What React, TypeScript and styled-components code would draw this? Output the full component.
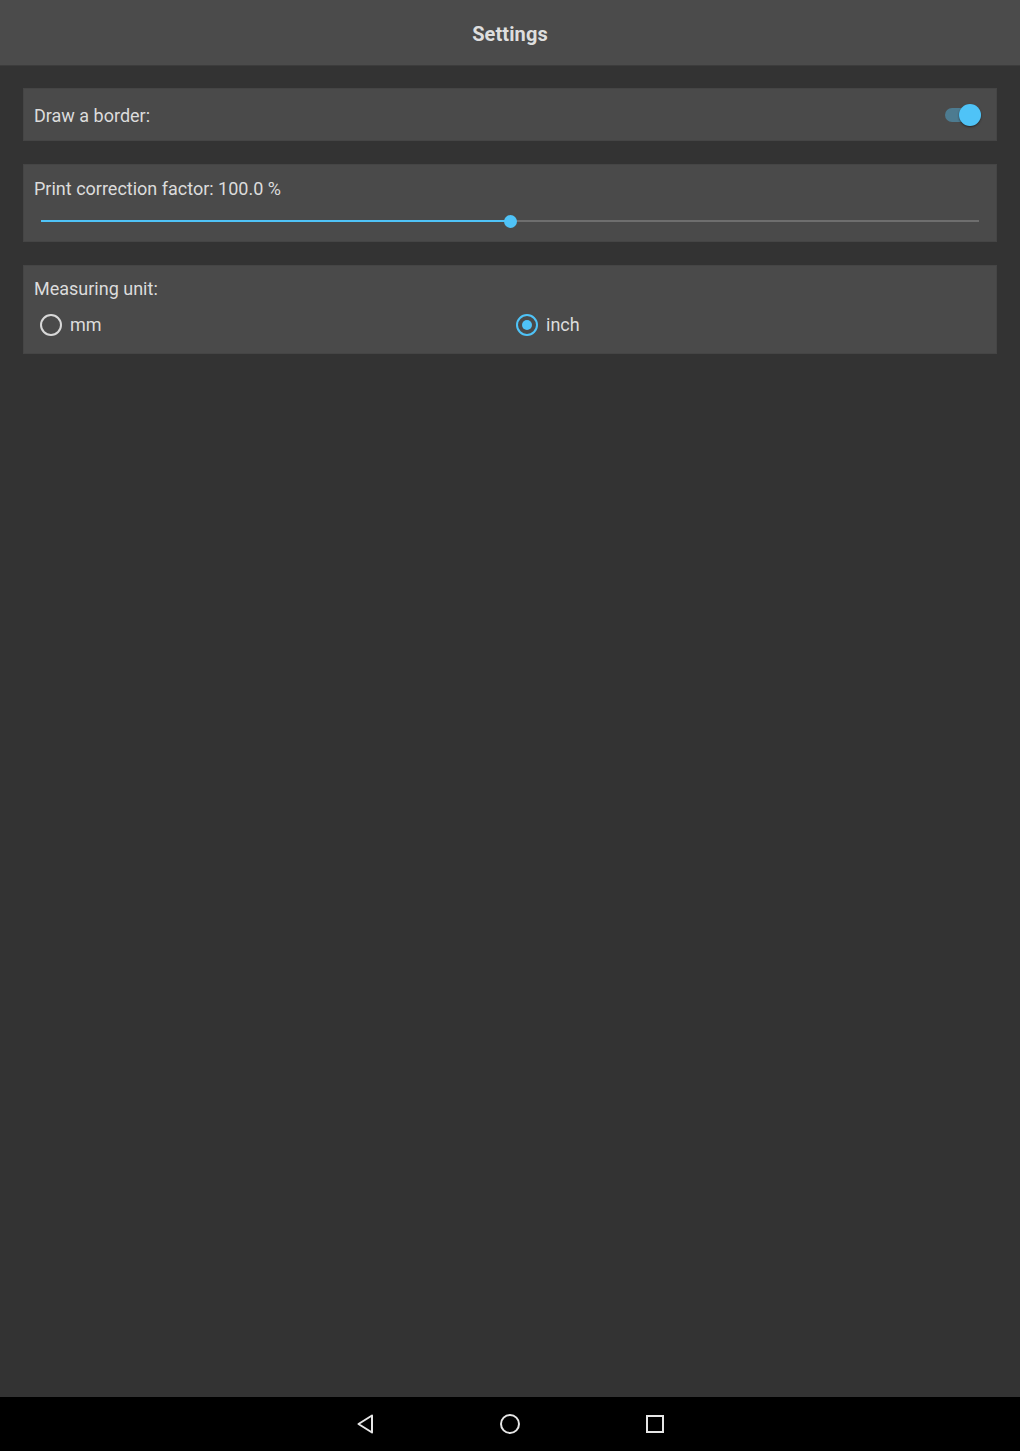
import React, { useState } from "react";
import styled, { createGlobalStyle } from "styled-components";

//global//

const GlobalStyle = createGlobalStyle`
  html, body {
    margin: 0;
    padding: 0;
    background: #333333;
  }
  body {
    font-family: Roboto, "Noto Sans", sans-serif;
  }
`;

//styled-components//

const Screen = styled.div`
  display: flex;
  flex-direction: column;
  height: 100vh;
  background: #333333;
`;

const Header = styled.header`
  height: 65px;
  flex-shrink: 0;
  display: flex;
  align-items: center;
  justify-content: center;
  background: #4b4b4b;
  border-bottom: 1px solid #3c3c3c;
`;

const Title = styled.h1`
  margin: 0;
  font-size: 20px;
  font-weight: 700;
  color: #dedede;
  letter-spacing: 0.1px;
  padding-top: 2px;
`;

const Content = styled.main`
  flex: 1;
  display: flex;
  flex-direction: column;
  gap: 23px;
  padding: 22px 23px 0;
`;

const Card = styled.section`
  background: #4a4a4a;
  border: 1px solid #454545;
  padding: 0 10px;
`;

const SwitchRow = styled(Card)`
  box-sizing: border-box;
  height: 53px;
  padding-top: 1px;
  display: flex;
  align-items: center;
  justify-content: space-between;
`;

const SliderCard = styled(Card)`
  padding-top: 13px;
  padding-bottom: 9px;
`;

const RadioCard = styled(Card)`
  padding-top: 12px;
  padding-bottom: 17px;
`;

const Label = styled.p`
  margin: 0;
  font-size: 18px;
  line-height: 21px;
  color: #dcdcdc;
`;

const SwitchTrack = styled.button<{ $on: boolean }>`
  position: relative;
  width: 36px;
  height: 14px;
  margin-right: 5px;
  padding: 0;
  border: none;
  border-radius: 7px;
  background: ${(p) => (p.$on ? "#4d7b90" : "#6a6a6a")};
  cursor: pointer;
`;

const SwitchThumb = styled.span<{ $on: boolean }>`
  position: absolute;
  top: -4px;
  left: ${(p) => (p.$on ? "14px" : "-2px")};
  width: 22px;
  height: 22px;
  border-radius: 50%;
  background: ${(p) => (p.$on ? "#4fc3f7" : "#bdbdbd")};
  box-shadow: 0 1px 2px rgba(0, 0, 0, 0.5);
`;

const SliderWrap = styled.div`
  position: relative;
  height: 22px;
  margin: 11px 7px 0;
  display: flex;
  align-items: center;
`;

const SliderTrack = styled.div`
  position: relative;
  width: 100%;
  height: 2px;
  background: #6e6e6e;
`;

const SliderFill = styled.div`
  position: absolute;
  left: 0;
  top: 0;
  height: 2px;
  background: #4fc3f7;
`;

const SliderThumb = styled.div`
  position: absolute;
  top: 50%;
  width: 13px;
  height: 13px;
  margin-left: -6.5px;
  margin-top: -6.5px;
  border-radius: 50%;
  background: #4fc3f7;
`;

const RadioGroup = styled.div`
  display: grid;
  grid-template-columns: 1fr 1fr;
  margin-top: 15px;
`;

const RadioOption = styled.label`
  display: flex;
  align-items: center;
  gap: 8px;
  padding-left: 6px;
  font-size: 18px;
  line-height: 22px;
  color: #dcdcdc;
  cursor: pointer;
`;

const RadioCircle = styled.span<{ $checked: boolean }>`
  width: 18px;
  height: 18px;
  border-radius: 50%;
  border: 2px solid ${(p) => (p.$checked ? "#4fc3f7" : "#d8d8d8")};
  display: flex;
  align-items: center;
  justify-content: center;

  &::after {
    content: "";
    width: 10px;
    height: 10px;
    border-radius: 50%;
    background: #4fc3f7;
    display: ${(p) => (p.$checked ? "block" : "none")};
  }
`;

const NavBar = styled.nav`
  height: 54px;
  flex-shrink: 0;
  background: #000000;
  display: flex;
  align-items: center;
  justify-content: center;
  gap: 123px;
`;

const NavButton = styled.div`
  width: 22px;
  height: 22px;
  display: flex;
  align-items: center;
  justify-content: center;
`;

////////////////////

const units = ["mm", "inch"];

const App = () => {
  const [border, setBorder] = useState(true);
  const [unit, setUnit] = useState("inch");
  const factor = 50;

  return (
    <Screen>
      <GlobalStyle />
      <Header>
        <Title>Settings</Title>
      </Header>

      <Content>
        <SwitchRow>
          <Label>Draw a border:</Label>
          <SwitchTrack $on={border} onClick={() => setBorder(!border)}>
            <SwitchThumb $on={border} />
          </SwitchTrack>
        </SwitchRow>

        <SliderCard>
          <Label>Print correction factor: 100.0 %</Label>
          <SliderWrap>
            <SliderTrack>
              <SliderFill style={{ width: factor + "%" }} />
              <SliderThumb style={{ left: factor + "%" }} />
            </SliderTrack>
          </SliderWrap>
        </SliderCard>

        <RadioCard>
          <Label>Measuring unit:</Label>
          <RadioGroup>
            {units.map((u) => (
              <RadioOption key={u} onClick={() => setUnit(u)}>
                <RadioCircle $checked={unit === u} />
                {u}
              </RadioOption>
            ))}
          </RadioGroup>
        </RadioCard>
      </Content>

      <NavBar>
        <NavButton>
          <svg width="20" height="22" viewBox="0 0 20 22">
            <path d="M17 2.5 L3.5 11 L17 19.5 Z" fill="none" stroke="#e6e6e6" strokeWidth="2" strokeLinejoin="round" />
          </svg>
        </NavButton>
        <NavButton>
          <svg width="22" height="22" viewBox="0 0 22 22">
            <circle cx="11" cy="11" r="9" fill="none" stroke="#e6e6e6" strokeWidth="2" />
          </svg>
        </NavButton>
        <NavButton>
          <svg width="20" height="20" viewBox="0 0 20 20">
            <rect x="2" y="2" width="16" height="16" fill="none" stroke="#e6e6e6" strokeWidth="2" />
          </svg>
        </NavButton>
      </NavBar>
    </Screen>
  );
};

export default App;
